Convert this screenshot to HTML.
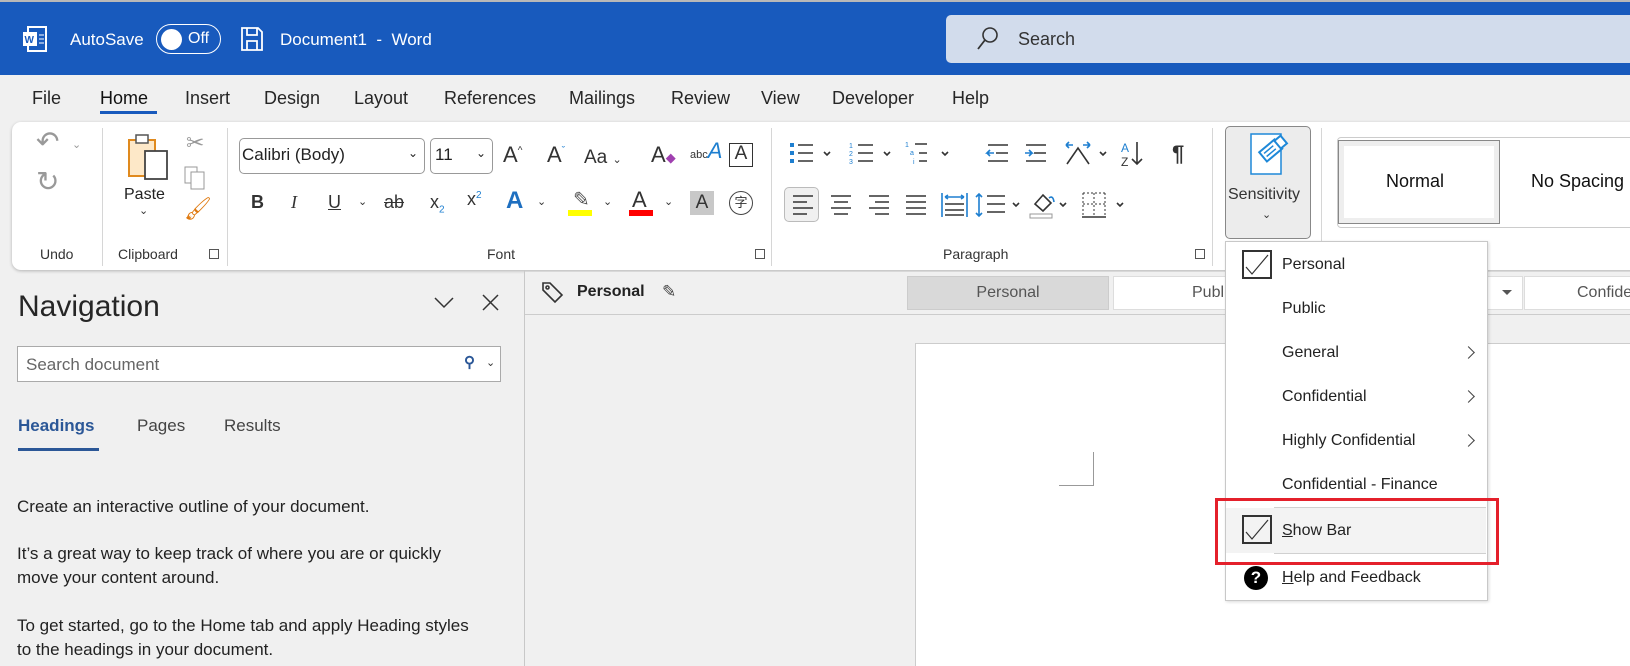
<!DOCTYPE html>
<html><head><meta charset="utf-8"><style>
*{margin:0;padding:0;box-sizing:border-box}
body{width:1630px;height:666px;overflow:hidden;background:#f0f0f0;font-family:"Liberation Sans",sans-serif;position:relative;color:#222}
.a{position:absolute;white-space:nowrap}
.tab{top:88px;font-size:18px;color:#262626}
.ic{position:absolute;font-size:19px;color:#333;line-height:1}
.gl{top:246px;font-size:14px;color:#333}
.sep{position:absolute;width:1px;background:#d6d6d6}
.mi{position:absolute;left:1282px;font-size:16px;color:#222}
.arr{position:absolute;left:1464px;width:9px;height:9px;border-top:1.5px solid #444;border-right:1.5px solid #444;transform:rotate(45deg)}
.chev{font-size:11px;color:#333}
</style></head><body>
<div class="a" style="left:0;top:0;width:1630px;height:75px;background:#185abd;border-top:2px solid #b8b8b8"></div>
<svg class="a" style="left:22px;top:26px" width="26" height="26"><rect x="6" y="1" width="18" height="24" fill="none" stroke="#fff" stroke-width="2"/><rect x="1" y="6" width="14" height="14" fill="#fff"/><text x="2.5" y="17" font-size="10" font-family="Liberation Sans" font-weight="bold" fill="#185abd">W</text><line x1="17" y1="9" x2="22" y2="9" stroke="#fff"/><line x1="17" y1="13" x2="22" y2="13" stroke="#fff"/><line x1="17" y1="17" x2="22" y2="17" stroke="#fff"/></svg>
<div class="a" style="left:70px;top:30px;font-size:17px;color:#fff">AutoSave</div>
<div class="a" style="left:156px;top:24px;width:65px;height:30px;border:1.5px solid #fff;border-radius:15px"></div>
<div class="a" style="left:161px;top:29px;width:21px;height:21px;background:#fff;border-radius:50%"></div>
<div class="a" style="left:188px;top:30px;font-size:16px;color:#fff">Off</div>
<svg class="a" style="left:240px;top:26px" width="24" height="26"><path d="M2 2h16l4 4v18H2z M7 2v7h10V2 M7 24v-9h10v9" fill="none" stroke="#fff" stroke-width="1.8"/></svg>
<div class="a" style="left:280px;top:30px;font-size:17px;color:#fff">Document1&nbsp; - &nbsp;Word</div>
<div class="a" style="left:946px;top:15px;width:700px;height:48px;background:#d2dcec;border-radius:5px"></div>
<svg class="a" style="left:976px;top:26px" width="24" height="26"><circle cx="14" cy="9" r="7" fill="none" stroke="#333" stroke-width="1.6"/><line x1="9" y1="14" x2="2" y2="23" stroke="#333" stroke-width="1.8"/></svg>
<div class="a" style="left:1018px;top:29px;font-size:18px;color:#333">Search</div>
<div class="a tab" style="left:32px">File</div>
<div class="a tab" style="left:100px;color:#111">Home</div>
<div class="a" style="left:100px;top:111px;width:57px;height:3px;background:#185abd"></div>
<div class="a tab" style="left:185px">Insert</div>
<div class="a tab" style="left:264px">Design</div>
<div class="a tab" style="left:354px">Layout</div>
<div class="a tab" style="left:444px">References</div>
<div class="a tab" style="left:569px">Mailings</div>
<div class="a tab" style="left:671px">Review</div>
<div class="a tab" style="left:761px">View</div>
<div class="a tab" style="left:832px">Developer</div>
<div class="a tab" style="left:952px">Help</div>
<div class="a" style="left:12px;top:122px;width:1640px;height:148px;background:#fff;border-radius:9px;box-shadow:0 1px 3px rgba(0,0,0,.25)"></div>
<div class="sep" style="left:102px;top:128px;height:138px"></div>
<div class="sep" style="left:227px;top:128px;height:138px"></div>
<div class="sep" style="left:771px;top:128px;height:138px"></div>
<div class="sep" style="left:1212px;top:128px;height:138px"></div>
<div class="sep" style="left:1321px;top:128px;height:138px"></div>
<div class="ic" style="left:36px;top:128px;font-size:28px;color:#999">↶</div><div class="ic chev" style="left:72px;top:140px;color:#999">⌄</div>
<div class="ic" style="left:36px;top:168px;font-size:28px;color:#999">↻</div>
<div class="a gl" style="left:40px">Undo</div>
<svg class="a" style="left:126px;top:132px" width="46" height="48"><rect x="3" y="8" width="26" height="36" fill="#fde8c8" stroke="#e08a1e" stroke-width="2"/><rect x="10" y="3" width="12" height="8" fill="#fff" stroke="#555" stroke-width="1.5"/><rect x="19" y="19" width="22" height="28" fill="#fff" stroke="#444" stroke-width="1.8"/></svg>
<div class="a" style="left:124px;top:186px;font-size:16px">Paste</div>
<div class="ic chev" style="left:139px;top:206px">⌄</div>
<div class="ic" style="left:186px;top:132px;color:#999;font-size:22px">✂</div>
<svg class="a" style="left:184px;top:166px" width="22" height="24"><rect x="1" y="1" width="12" height="16" fill="none" stroke="#999"/><rect x="7" y="6" width="13" height="17" fill="#fff" stroke="#999"/></svg>
<div class="ic" style="left:184px;top:198px;color:#e07a10;font-size:22px">🖌</div>
<div class="a gl" style="left:118px">Clipboard</div>
<div class="a" style="left:209px;top:249px;width:10px;height:10px;border:1px solid #555"></div>
<div class="a" style="left:239px;top:138px;width:186px;height:36px;border:1px solid #999;border-radius:5px;font-size:17px;padding:6px 2px">Calibri (Body)<span style="position:absolute;right:6px;top:7px;font-size:12px">⌄</span></div>
<div class="a" style="left:430px;top:138px;width:63px;height:36px;border:1px solid #999;border-radius:5px;font-size:17px;padding:6px 4px">11<span style="position:absolute;right:6px;top:7px;font-size:12px">⌄</span></div>
<div class="ic" style="left:503px;top:144px;font-size:22px">A<sup style="font-size:10px">^</sup></div>
<div class="ic" style="left:547px;top:144px;font-size:22px">A<sup style="font-size:10px;color:#1e7fd0">ˇ</sup></div>
<div class="ic" style="left:584px;top:148px;font-size:19px">Aa <span class="chev">⌄</span></div>
<div class="ic" style="left:651px;top:144px;font-size:22px">A<span style="color:#a040b0;font-size:13px">◆</span></div>
<div class="ic" style="left:690px;top:140px;font-size:11px">abc<span style="color:#1e7fd0;font-size:22px;font-style:italic">A</span></div>
<div class="ic" style="left:729px;top:143px;width:24px;height:24px;border:1.5px solid #333;font-size:19px;text-align:center">A</div>
<div class="ic" style="left:251px;top:193px;font-weight:bold;font-size:18px">B</div>
<div class="ic" style="left:291px;top:193px;font-style:italic;font-size:18px;font-family:'Liberation Serif'">I</div>
<div class="ic" style="left:328px;top:193px;text-decoration:underline;font-size:18px">U</div><div class="ic chev" style="left:358px;top:197px">⌄</div>
<div class="ic" style="left:384px;top:193px;text-decoration:line-through;font-size:18px">ab</div>
<div class="ic" style="left:430px;top:193px;font-size:18px">x<sub style="color:#1e7fd0;font-size:10px">2</sub></div>
<div class="ic" style="left:467px;top:190px;font-size:18px">x<sup style="color:#1e7fd0;font-size:10px">2</sup></div>
<div class="ic" style="left:506px;top:189px;font-size:24px;color:#1e6fc0;font-weight:bold">A</div><div class="ic chev" style="left:537px;top:197px">⌄</div>
<div class="ic" style="left:573px;top:190px;font-size:20px;color:#555">✎</div><div class="a" style="left:568px;top:210px;width:24px;height:6px;background:#ffff00"></div><div class="ic chev" style="left:603px;top:197px">⌄</div>
<div class="ic" style="left:632px;top:189px;font-size:22px">A</div><div class="a" style="left:629px;top:210px;width:24px;height:6px;background:#f00"></div><div class="ic chev" style="left:664px;top:197px">⌄</div>
<div class="ic" style="left:690px;top:191px;width:24px;height:24px;background:#c8c8c8;font-size:19px;text-align:center;padding-top:2px">A</div>
<div class="ic" style="left:729px;top:191px;width:24px;height:24px;border:1.5px solid #444;border-radius:50%;font-size:13px;text-align:center;padding-top:3px;font-family:'Noto Sans CJK SC',sans-serif">字</div>
<div class="a gl" style="left:487px">Font</div>
<div class="a" style="left:755px;top:249px;width:10px;height:10px;border:1px solid #555"></div>
<svg class="a" style="left:785px;top:140px" width="410" height="90" stroke="#333" stroke-width="1.6" fill="none">
<g><rect x="5" y="3" width="4" height="4" fill="#1e7fd0" stroke="none"/><rect x="5" y="11" width="4" height="4" fill="#1e7fd0" stroke="none"/><rect x="5" y="19" width="4" height="4" fill="#1e7fd0" stroke="none"/><path d="M13 5h15M13 13h15M13 21h15"/><path d="M39 12l3 3 3-3"/></g>
<g transform="translate(60,0)"><path d="M13 5h15M13 13h15M13 21h15"/><text x="4" y="8" font-size="7" fill="#1e7fd0" stroke="none">1</text><text x="4" y="16" font-size="7" fill="#1e7fd0" stroke="none">2</text><text x="4" y="24" font-size="7" fill="#1e7fd0" stroke="none">3</text><path d="M39 12l3 3 3-3"/></g>
<g transform="translate(117,0)"><path d="M13 4h12M17 13h8M17 21h8"/><text x="3" y="7" font-size="7" fill="#1e7fd0" stroke="none">1</text><text x="8" y="15" font-size="7" fill="#1e7fd0" stroke="none">a</text><text x="11" y="24" font-size="7" fill="#1e7fd0" stroke="none">i</text><path d="M40 12l3 3 3-3"/></g>
<g transform="translate(197,0)"><path d="M6 5h20M14 13h12M6 21h20"/><path d="M12 13H5l3-3M5 13l3 3" stroke="#1e7fd0"/></g>
<g transform="translate(235,0)"><path d="M6 5h20M14 13h12M6 21h20"/><path d="M5 13h7l-3-3M12 13l-3 3" stroke="#1e7fd0"/></g>
<g transform="translate(278,0)"><path d="M4 24l11-16 11 16"/><path d="M3 5h7M20 5h7M3 5l3-3M3 5l3 3M27 5l-3-3M27 5l-3 3" stroke="#1e7fd0"/><path d="M37 12l3 3 3-3"/></g>
<g transform="translate(335,0)"><text x="1" y="12" font-size="12" font-family="Liberation Sans" fill="#1e7fd0" stroke="none">A</text><text x="1" y="26" font-size="12" font-family="Liberation Sans" fill="#333" stroke="none">Z</text><path d="M17 2v22M12 19l5 5 5-5"/></g>
</svg>
<div class="ic" style="left:1172px;top:143px;font-size:22px;font-weight:bold">¶</div>
<div class="a" style="left:784px;top:187px;width:35px;height:35px;background:#f0f0f0;border:1px solid #bbb;border-radius:5px"></div>
<svg class="a" style="left:785px;top:190px" width="360" height="30" stroke="#333" stroke-width="1.6" fill="none">
<path d="M8 6h20M8 12h14M8 18h20M8 24h14"/>
<path d="M46 6h20M49 12h14M46 18h20M49 24h14"/>
<path d="M84 6h20M90 12h14M84 18h20M90 24h14"/>
<path d="M121 6h20M121 12h20M121 18h20M121 24h20"/>
<path d="M157 3v24M182 3v24" stroke="#1e7fd0"/><path d="M160 7h19M160 7l3-2M160 7l3 2M179 7l-3-2M179 7l-3 2" stroke="#1e7fd0"/><path d="M160 14h19M160 20h19M160 25h19"/>
<path d="M194 4v22M191 7l3-3 3 3M191 23l3 3 3-3" stroke="#1e7fd0"/><path d="M202 6h18M202 14h18M202 22h18"/><path d="M228 13l3 3 3-3"/>
<path d="M250 14l8-9 8 8-8 8z"/><path d="M264 8q4-3 5 4" stroke="#1e7fd0"/><rect x="245" y="24" width="22" height="4" stroke="#999" stroke-width="1"/><path d="M275 13l3 3 3-3"/>
<path d="M309 3v24M298 14h22M298 3h22M298 3v24M320 3v24" stroke-dasharray="2 2" stroke-width="1"/><path d="M297 27h24"/><path d="M332 13l3 3 3-3"/>
</svg>
<div class="a gl" style="left:943px">Paragraph</div>
<div class="a" style="left:1195px;top:249px;width:10px;height:10px;border:1px solid #555"></div>
<div class="a" style="left:1225px;top:126px;width:86px;height:113px;background:#ececec;border:1px solid #888;border-radius:5px"></div>
<svg class="a" style="left:1248px;top:130px" width="46" height="46"><rect x="3" y="4" width="30" height="40" fill="#fff" stroke="#1e88d8" stroke-width="1.5"/><g transform="rotate(-40 24 22)"><rect x="14" y="14" width="20" height="12" fill="#fff" stroke="#1e88d8" stroke-width="2"/><rect x="33" y="15" width="8" height="10" fill="#fff" stroke="#1e88d8" stroke-width="2"/><path d="M17 18h12M17 22h12" stroke="#1e88d8" stroke-width="1.5"/></g></svg>
<div class="a" style="left:1228px;top:186px;font-size:16px;color:#333">Sensitivity</div>
<div class="ic chev" style="left:1262px;top:210px">⌄</div>
<div class="a" style="left:1337px;top:137px;width:320px;height:91px;border:1px solid #ccc;border-radius:4px"></div>
<div class="a" style="left:1338px;top:140px;width:162px;height:84px;border:1px solid #888;background:#fff;box-shadow:inset 0 0 0 5px #eee"></div>
<div class="a" style="left:1386px;top:171px;font-size:18px;color:#111">Normal</div>
<div class="a" style="left:1531px;top:171px;font-size:18px;color:#111">No Spacing</div>
<div class="a" style="left:18px;top:290px;font-size:30px;color:#262626">Navigation</div>
<svg class="a" style="left:433px;top:292px" width="70" height="22" stroke="#333" stroke-width="1.5" fill="none"><path d="M2 6l9 9 9-9"/><path d="M50 3l15 15M65 3L50 18"/></svg>
<div class="a" style="left:17px;top:346px;width:484px;height:36px;background:#fff;border:1px solid #aaa"></div>
<div class="a" style="left:26px;top:355px;font-size:17px;color:#666">Search document</div>
<div class="a" style="left:464px;top:353px;font-size:15px;color:#2b5797;font-weight:bold">⚲</div>
<div class="ic chev" style="left:486px;top:358px">⌄</div>
<div class="a" style="left:18px;top:416px;font-size:17px;color:#2b5797;font-weight:bold">Headings</div>
<div class="a" style="left:18px;top:448px;width:81px;height:3px;background:#2b5797"></div>
<div class="a" style="left:137px;top:416px;font-size:17px;color:#444">Pages</div>
<div class="a" style="left:224px;top:416px;font-size:17px;color:#444">Results</div>
<div class="a" style="left:17px;top:495px;font-size:17px;line-height:24px;color:#222">Create an interactive outline of your document.</div>
<div class="a" style="left:17px;top:542px;font-size:17px;line-height:24px;color:#222">It’s a great way to keep track of where you are or quickly<br>move your content around.</div>
<div class="a" style="left:17px;top:614px;font-size:17px;line-height:24px;color:#222">To get started, go to the Home tab and apply Heading styles<br>to the headings in your document.</div>
<div class="a" style="left:524px;top:270px;width:1px;height:396px;background:#c8c8c8"></div>
<div class="a" style="left:525px;top:272px;width:1105px;height:394px;background:#f0f0f0"></div>
<div class="a" style="left:525px;top:314px;width:1105px;height:1px;background:#ccc"></div>
<svg class="a" style="left:540px;top:280px" width="26" height="26" fill="none" stroke="#333" stroke-width="1.6"><path d="M3 10V3h7l12 12-7 7z"/><circle cx="7.5" cy="7.5" r="1.5"/></svg>
<div class="a" style="left:577px;top:283px;font-size:16px;font-weight:bold;color:#222">Personal</div>
<div class="a" style="left:662px;top:282px;font-size:17px;color:#444">✎</div>
<div class="a" style="left:907px;top:276px;width:202px;height:34px;background:#d9d9d9;border:1px solid #ccc;font-size:16px;color:#555;text-align:center;padding-top:7px">Personal</div>
<div class="a" style="left:1113px;top:276px;width:410px;height:34px;background:#fff;border:1px solid #ddd;font-size:16px;color:#555;padding:7px 0 0 78px">Public</div>
<div class="a" style="left:1502px;top:290px;border-left:5px solid transparent;border-right:5px solid transparent;border-top:5px solid #555"></div>
<div class="a" style="left:1524px;top:276px;width:120px;height:34px;background:#fff;border:1px solid #ddd;font-size:16px;color:#555;padding:7px 0 0 52px">Confidential</div>
<div class="a" style="left:915px;top:343px;width:715px;height:323px;background:#fff;border-left:1px solid #ccc;border-top:1px solid #ccc"></div>
<div class="a" style="left:1059px;top:452px;width:35px;height:34px;border-right:1px solid #999;border-bottom:1px solid #999"></div>
<div class="a" style="left:1225px;top:241px;width:263px;height:360px;background:#fff;border:1px solid #c8c8c8;box-shadow:1px 1px 3px rgba(0,0,0,.15)"></div>
<div class="a" style="left:1242px;top:250px;width:30px;height:29px;border:2px solid #333"></div>
<svg class="a" style="left:1244px;top:252px" width="26" height="25" stroke="#333" stroke-width="1.2" fill="none"><path d="M2 15l6 7L24 3"/></svg>
<div class="mi" style="top:256px">Personal</div>
<div class="mi" style="top:300px">Public</div>
<div class="mi" style="top:344px">General</div><div class="arr" style="top:348px"></div>
<div class="mi" style="top:388px">Confidential</div><div class="arr" style="top:392px"></div>
<div class="mi" style="top:432px">Highly Confidential</div><div class="arr" style="top:436px"></div>
<div class="mi" style="top:476px">Confidential - Finance</div>
<div class="a" style="left:1226px;top:508px;width:260px;height:45px;background:#f3f3f3"></div>
<div class="a" style="left:1274px;top:507px;width:212px;height:1px;background:#d0d0d0"></div>
<div class="a" style="left:1274px;top:553px;width:212px;height:1px;background:#d0d0d0"></div>
<div class="a" style="left:1242px;top:515px;width:30px;height:29px;border:2px solid #333"></div>
<svg class="a" style="left:1244px;top:517px" width="26" height="25" stroke="#333" stroke-width="1.2" fill="none"><path d="M2 15l6 7L24 3"/></svg>
<div class="mi" style="top:522px"><u>S</u>how Bar</div>
<div class="a" style="left:1215px;top:498px;width:284px;height:67px;border:3px solid #e4202b"></div>
<div class="a" style="left:1244px;top:566px;width:24px;height:24px;border-radius:50%;background:#000;color:#fff;font-weight:bold;font-size:17px;text-align:center;line-height:24px">?</div>
<div class="mi" style="top:569px"><u>H</u>elp and Feedback</div>
</body></html>
